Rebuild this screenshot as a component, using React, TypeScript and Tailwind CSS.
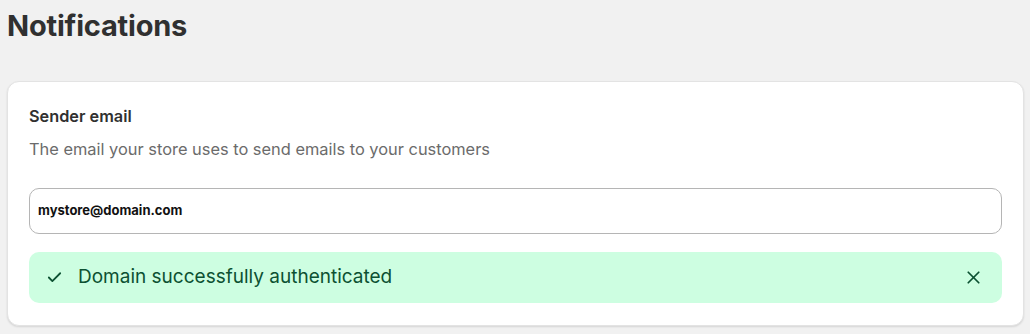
import { Check, X } from 'lucide-react';

export default function App() {
  return (
    <div className="min-h-[334px] bg-[#f1f1f1] px-[7px] pt-[6px] font-['Inter',sans-serif] text-[#303030]">
      <h1 className="text-[29px] font-bold leading-[40px] tracking-[-0.2px]">Notifications</h1>

      <section className="mt-[35px] w-[1017px] rounded-[12px] border border-[#e3e3e3] bg-white px-[21px] pb-[22px] pt-[22px] shadow-[0_1px_2px_rgba(0,0,0,0.12)]">
        <h2 className="text-[16.3px] font-semibold leading-[24px]">Sender email</h2>
        <p className="mt-[9px] text-[16.4px] leading-[24px] text-[#6b6b6b]">
          The email your store uses to send emails to your customers
        </p>

        <div className="mt-[27px] flex h-[46px] items-center rounded-[10px] border border-[#b5b5b5] bg-white px-[8px]">
          <span className="text-[13px] font-bold text-[#111]">mystore@domain.com</span>
        </div>

        <div className="mt-[18px] flex h-[51px] items-center rounded-[10px] bg-[#cdfee1] pl-[17px] pr-[18px] text-[#0c5132]">
          <Check className="h-[17px] w-[17px]" strokeWidth={2.5} />
          <span className="ml-[15px] flex-1 text-[19px]">Domain successfully authenticated</span>
          <X className="h-[21px] w-[21px]" strokeWidth={2} />
        </div>
      </section>
    </div>
  );
}
